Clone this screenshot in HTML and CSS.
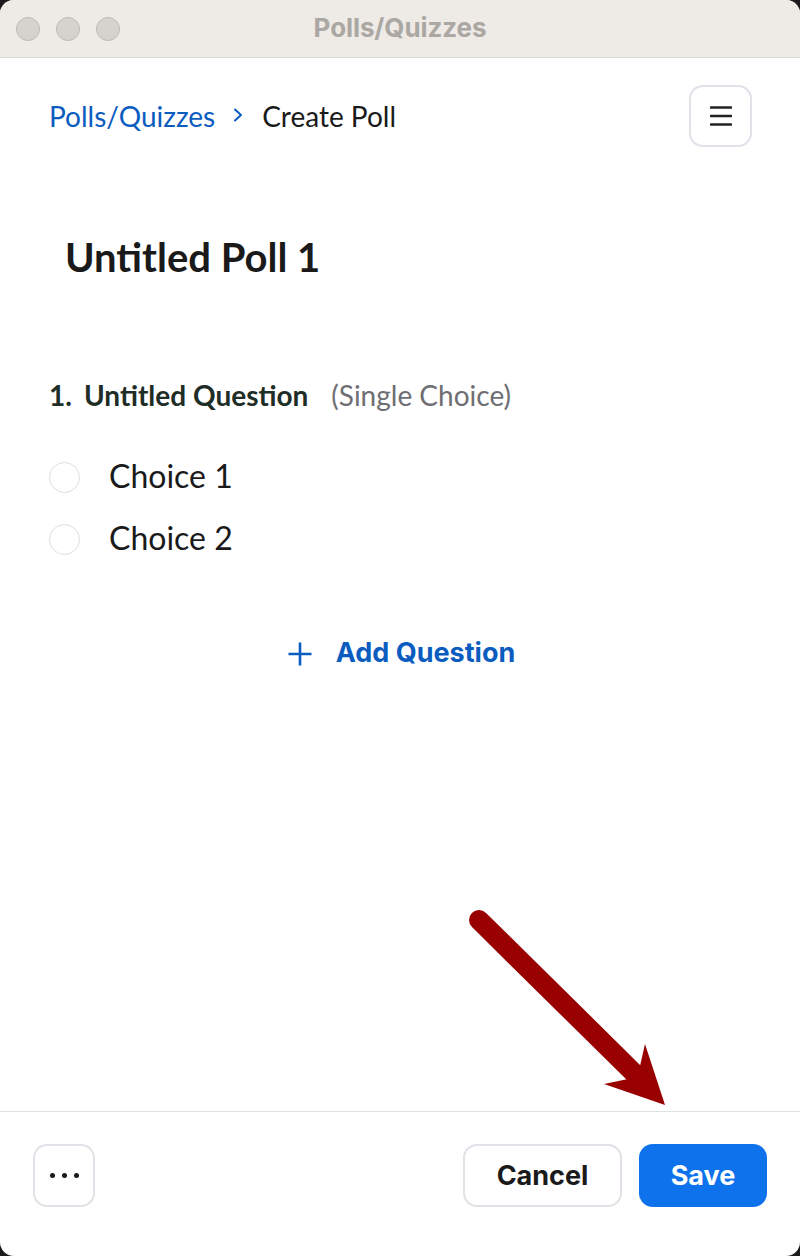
FILE: index.html
```html
<!DOCTYPE html>
<html>
<head>
<meta charset="utf-8">
<link rel="stylesheet" href="styles.css">
</head>
<body>
<div class="window">
  <div class="titlebar">
    <div class="lights"><span class="light"></span><span class="light"></span><span class="light"></span></div>
    <div class="wintitle">Polls/Quizzes</div>
    <div></div>
  </div>
  <div class="content">
    <div class="header">
      <div class="crumbs">
        <span class="crumb-link">Polls/Quizzes</span>
        <svg class="chev" width="10" height="14" viewBox="0 0 10 14"><path d="M2 1.5 L8 7 L2 12.5" fill="none" stroke="#0B5CBF" stroke-width="2" stroke-linecap="round" stroke-linejoin="round"/></svg>
        <span class="crumb-current">Create Poll</span>
      </div>
      <button class="icon-btn menu-btn">
        <svg width="22" height="20" viewBox="0 0 22 20"><path d="M1 1.5H21M1 10H21M1 18.5H21" stroke="#222" stroke-width="2.6" stroke-linecap="round"/></svg>
      </button>
    </div>
    <h1 class="poll-title">Untitled Poll 1</h1>
    <div class="question">
      <span class="qnum">1.</span>
      <span class="qtext">Untitled Question</span>
      <span class="qtype">(Single Choice)</span>
    </div>
    <div class="choices">
      <div class="choice"><span class="radio"></span><span class="choice-text">Choice 1</span></div>
      <div class="choice"><span class="radio"></span><span class="choice-text">Choice 2</span></div>
    </div>
    <div class="add-row">
      <div class="add-q">
        <svg width="24" height="24" viewBox="0 0 24 24"><path d="M12 0.5V23.5M0.5 12H23.5" stroke="#0B5CBF" stroke-width="2.6"/></svg>
        <span>Add Question</span>
      </div>
    </div>
  </div>
  <div class="footer">
    <button class="icon-btn more-btn"><span class="dot"></span><span class="dot"></span><span class="dot"></span></button>
    <div class="actions">
      <button class="btn btn-cancel">Cancel</button>
      <button class="btn btn-save">Save</button>
    </div>
  </div>
  <svg class="annot-arrow" width="800" height="1256" viewBox="0 0 800 1256">
    <line x1="479" y1="920" x2="634" y2="1073" stroke="#990000" stroke-width="20" stroke-linecap="round"/>
    <polygon points="665,1105 645,1044 640,1066 628,1079 604,1084" fill="#990000"/>
  </svg>
</div>
</body>
</html>
```

FILE: styles.css
```css
* { box-sizing: border-box; }
html, body { margin: 0; padding: 0; }
body {
  background: #1c1c1c;
  width: 800px;
  height: 1256px;
  overflow: hidden;
}
.window {
  position: relative;
  width: 800px;
  height: 1256px;
  background: #fff;
  border-radius: 14px;
  overflow: hidden;
  display: flex;
  flex-direction: column;
  font-family: Lato, "Noto Sans", sans-serif;
}
.titlebar {
  height: 58px;
  flex: none;
  background: #EEEAE6;
  border-bottom: 1px solid #D9D6D3;
  display: grid;
  grid-template-columns: 1fr auto 1fr;
  align-items: center;
  padding: 0 16px;
}
.lights { display: flex; gap: 16px; }
.light {
  width: 24px;
  height: 24px;
  border-radius: 50%;
  background: #D6D2CE;
  border: 1px solid #BDB9B5;
}
.wintitle {
  font-family: Inter, "Liberation Sans", sans-serif;
  font-weight: 700;
  font-size: 26px;
  color: #ABA7A3;
  letter-spacing: -0.1px;
  padding-bottom: 2px;
}
.content {
  flex: 1;
  padding: 27px 48px 0 49px;
}
.header {
  display: flex;
  justify-content: space-between;
  align-items: center;
  height: 62px;
}
.crumbs {
  display: flex;
  align-items: center;
  font-size: 28px;
}
.crumb-link { color: #0B5CBF; }
.chev { margin: 0 19px 2px 18px; }
.crumb-current { color: #1a1a1a; }
.icon-btn {
  background: #fff;
  border: 2px solid #DFE2E6;
  border-radius: 14px;
  padding: 0;
  display: flex;
  align-items: center;
  justify-content: center;
}
.menu-btn { width: 63px; height: 62px; }
.poll-title {
  margin: 87px 0 0 16px;
  font-size: 40px;
  line-height: 46px;
  font-weight: 700;
  color: #1a1a1a;
}
.question {
  margin-top: 99px;
  display: flex;
  align-items: baseline;
  font-size: 28px;
  line-height: 32px;
}
.qnum { font-weight: 700; color: #1F2D27; width: 35px; }
.qtext { font-weight: 700; color: #1F2D27; margin-right: 23px; }
.qtype { color: #6E6E73; }
.choices {
  margin-top: 45px;
  display: flex;
  flex-direction: column;
  gap: 22px;
}
.choice {
  display: flex;
  align-items: center;
  height: 40px;
}
.radio {
  width: 31px;
  height: 31px;
  border-radius: 50%;
  border: 1.5px solid #DCDFE3;
  margin-right: 29px;
  margin-top: 2px;
}
.choice-text { font-size: 32px; line-height: 40px; color: #1a1a1a; }
.add-row {
  margin-top: 77px;
  display: flex;
  justify-content: center;
}
.add-q {
  display: flex;
  align-items: center;
  gap: 24px;
  font-family: Inter, "Liberation Sans", sans-serif;
  font-weight: 700;
  font-size: 27px;
  line-height: 36px;
  color: #0B5CBF;
  margin-left: 2px;
}
.add-q svg { margin-top: 2px; }
.footer {
  flex: none;
  height: 145px;
  border-top: 1px solid #DFE1E5;
  display: flex;
  justify-content: space-between;
  align-items: flex-start;
  padding: 32px 33px 0 33px;
}
.more-btn { width: 62px; height: 63px; gap: 7px; }
.dot { width: 5px; height: 5px; border-radius: 50%; background: #1a1a1a; }
.actions { display: flex; gap: 17px; }
.btn {
  height: 63px;
  border-radius: 14px;
  font-family: Inter, "Liberation Sans", sans-serif;
  font-weight: 700;
  font-size: 27px;
  padding: 0;
}
.btn-cancel {
  width: 159px;
  background: #fff;
  border: 2px solid #DFE2E6;
  color: #1a1a1a;
}
.btn-save {
  width: 128px;
  background: #0E72ED;
  border: none;
  color: #fff;
}
.annot-arrow {
  position: absolute;
  left: 0;
  top: 0;
  pointer-events: none;
}
```
